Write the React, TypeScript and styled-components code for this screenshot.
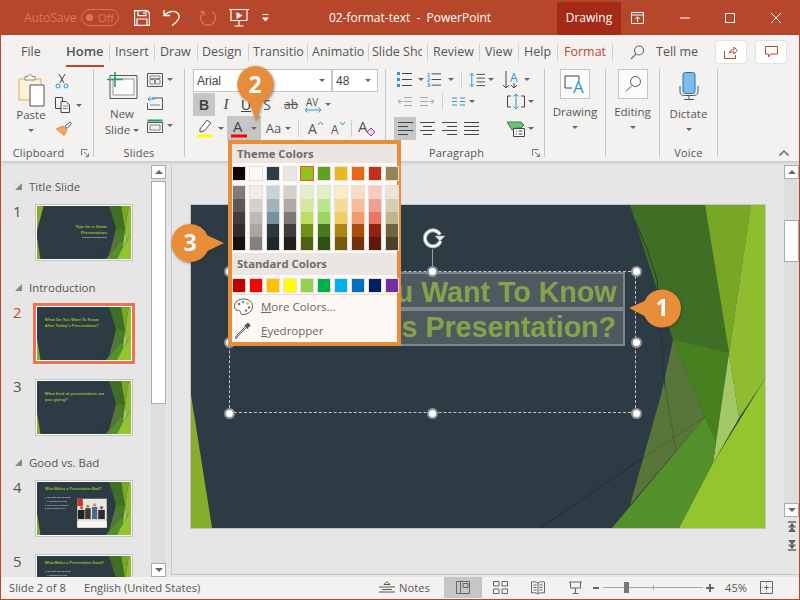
import React from "react";
import styled, { createGlobalStyle } from "styled-components";

const Global = createGlobalStyle`
  html, body { margin: 0; padding: 0; background: #fff; }
  * { box-sizing: border-box; }
`;

const RED = "#b7472a";
const INK = "#444444";
const BLUE = "#2b95d6";

const Window = styled.div`
  position: relative; width: 800px; height: 600px; overflow: hidden;
  display: flex; flex-direction: column;
  border-left: 1px solid ${RED}; border-right: 1px solid ${RED}; border-bottom: 1px solid ${RED};
  font-family: "Open Sans", "Noto Sans", sans-serif; color: #555; background: #e6e6e6;
`;
const TitleBar = styled.header`
  height: 35px; background: ${RED}; display: flex; align-items: center; flex: none; color: #fff;
`;
const Slot = styled.div<{ $l?: number; $w?: number }>`
  margin-left: ${(p) => p.$l ?? 0}px;
  ${(p) => (p.$w ? `width:${p.$w}px;` : "")}
  display: flex; align-items: center; justify-content: center; flex: none;
`;
const AutoSave = styled.span`
  margin-left: 23px; width: 57px; font-size: 12px; color: #d8775d; white-space: nowrap;
`;
const Toggle = styled.div`
  width: 38px; height: 17px; border: 1.5px solid #d8775d; border-radius: 9px; display: flex; align-items: center;
  padding-left: 4px; gap: 5px; font-size: 11px; color: #d8775d;
`;
const Dot = styled.i`
  width: 7px; height: 7px; border-radius: 50%; background: #d8775d; display: block;
`;
const DocTitle = styled.div`
  margin-left: 59px; width: 160px; font-size: 12px; white-space: pre;
`;
const DrawingTab = styled.div`
  margin-left: 68px; width: 64px; height: 33px; align-self: flex-end; background: #a52a17; display: flex;
  align-items: center; justify-content: center; font-size: 12px; padding-bottom: 2px;
`;
const TabBar = styled.nav`
  height: 34px; background: #f3f2f1; display: flex; align-items: center; flex: none;
`;
const Tab = styled.div<{ $l: number; $w: number; $accent?: boolean }>`
  margin-left: ${(p) => p.$l}px; width: ${(p) => p.$w}px; height: 20px; line-height: 19px; flex: none; overflow: hidden;
  font-size: 12.5px; white-space: nowrap; text-align: left;
  color: ${(p) => (p.$accent ? RED : "#555")};
`;
const TabUnderline = styled.div`
  position: absolute; left: 0; bottom: 0; width: 38px; height: 2px; background: ${RED};
`;
const TabSep = styled.i<{ $l?: number }>`
  width: 1px; height: 17px; background: #d2d0ce; flex: none; display: block; margin-left: ${(p) => p.$l ?? 0}px;
`;
const HomeBox = styled.div`
  margin-left: 25px; width: 43px; height: 26px; line-height: 21px; position: relative; font-size: 13px; font-weight: 600;
  color: #555; margin-top: 3px; flex: none;
`;
const AppButton = styled.div<{ $l: number }>`
  margin-left: ${(p) => p.$l}px; width: 32px; height: 24px; background: #fff; border: 1px solid #e4e2e0; border-radius: 3px;
  display: flex; align-items: center; justify-content: center; flex: none;
`;
const Ribbon = styled.section`
  height: 92px; flex: none; background: #f3f2f1; display: flex; position: relative; z-index: 2;
  box-shadow: 0 2px 3px rgba(0,0,0,0.12);
`;
const Group = styled.div<{ $w: number }>`
  width: ${(p) => p.$w}px; height: 88px; flex: none; display: flex; flex-direction: column;
  border-right: 1px solid #c6c6c6;
`;
const GroupBody = styled.div`
  height: 76px; flex: none; display: flex; min-height: 0;
`;
const GroupLabel = styled.div<{ $launch?: boolean }>`
  height: 12px; line-height: 16px; font-size: 11px; text-align: center; position: relative; color: #555; letter-spacing: 0.2px;
  padding-right: ${(p) => (p.$launch ? 17 : 0)}px;
`;
const Launcher = styled.svg`
  position: absolute; right: 4px; top: 4px;
`;
const Collapse = styled.svg`
  position: absolute; left: 778px; top: 81px;
`;
const Column = styled.div<{ $l?: number; $w?: number; $gap?: number; $t?: number }>`
  margin-left: ${(p) => p.$l ?? 0}px; margin-top: ${(p) => p.$t ?? 0}px;
  ${(p) => (p.$w ? `width:${p.$w}px;` : "")}
  display: flex; flex-direction: column; align-items: center; flex: none; gap: ${(p) => p.$gap ?? 0}px;
`;
const LeftColumn = styled(Column)`
  align-items: flex-start;
`;
const BigLabel = styled.div<{ $t?: number }>`
  font-size: 11.5px; line-height: 16px; margin-top: ${(p) => p.$t ?? 0}px; color: #555; display: flex; align-items: center; gap: 3px; white-space: nowrap;
`;
const Caret = styled.i<{ $l?: number; $t?: number }>`
  display: block; flex: none; width: 0; height: 0; border-left: 3.5px solid transparent; border-right: 3.5px solid transparent;
  border-top: 3.5px solid #666; margin-left: ${(p) => p.$l ?? 0}px; margin-top: ${(p) => p.$t ?? 0}px;
`;
const Row = styled.div<{ $h: number; $t?: number }>`
  height: ${(p) => p.$h}px; margin-top: ${(p) => p.$t ?? 0}px; display: flex; align-items: center; flex: none;
`;
const Combo = styled.div<{ $w: number }>`
  width: ${(p) => p.$w}px; height: 23px; background: #fff; border: 1px solid #c6c6c6; display: flex; align-items: center;
  padding: 0 6px 0 3px; justify-content: space-between; font-family: "Liberation Sans", sans-serif; font-size: 12px; color: #444; flex: none;
`;
const Tool = styled.div<{ $w: number; $l?: number; $on?: boolean; $h?: number }>`
  width: ${(p) => p.$w}px; height: ${(p) => p.$h ?? 23}px; margin-left: ${(p) => p.$l ?? 0}px; flex: none;
  background: ${(p) => (p.$on ? "#c6c6c6" : "transparent")}; display: flex; align-items: center; justify-content: center;
  color: #555; font-size: 14px;
`;
const BoldGlyph = styled.b`
  font-family: "Liberation Sans", sans-serif; font-size: 14px; color: #444;
`;
const SerifGlyph = styled.i`
  font-family: "Liberation Serif", serif; font-size: 15px; color: #444;
`;
const UnderGlyph = styled.u`
  font-family: "Liberation Sans", sans-serif; font-size: 14px; color: #444;
`;
const SansGlyph = styled.span<{ $size?: number; $strike?: boolean }>`
  font-size: ${(p) => p.$size ?? 14}px; color: #555; white-space: nowrap;
  ${(p) => (p.$strike ? "text-decoration: line-through;" : "")}
`;
const VSep = styled.i<{ $l: number }>`
  display: block; width: 1px; height: 17px; background: #d2d0ce; margin-left: ${(p) => p.$l}px; flex: none;
`;
const IconTile = styled.div`
  width: 30px; height: 30px; background: #fbfbfb; border: 1px solid #c6c6c6; display: flex; align-items: center; justify-content: center;
`;
const Body = styled.div`
  flex: 1; min-height: 0; display: flex; padding-top: 4px;
`;
const LeftPane = styled.aside`
  width: 150px; flex: none; overflow: hidden; padding-top: 10px; background: #e6e6e6;
`;
const Section = styled.div`
  margin-bottom: 16px;
`;
const SectionHead = styled.div`
  height: 24px; margin-bottom: 6px; display: flex; align-items: center; gap: 7px; padding: 0 0 2px 14px; font-size: 11.5px; color: #555;
`;
const SlideList = styled.div`
  display: flex; flex-direction: column; gap: 19px;
`;
const ThumbRow = styled.div`
  display: flex; height: 55px; position: relative;
`;
const ThumbNum = styled.div<{ $on?: boolean }>`
  width: 35px; padding-left: 12px; font-size: 15px; line-height: 12px; color: ${(p) => (p.$on ? "#d9432a" : "#555")};
`;
const Thumb = styled.div<{ $on?: boolean }>`
  width: 96px; height: 55px; background: #2d3b44; flex: none; line-height: 0;
  ${(p) => (p.$on
    ? "border: 1px solid #fff; box-shadow: 0 0 0 3px #ef7150;"
    : "border: 1px solid #fff; box-shadow: 0 0 0 1px #c4c4c4;")}
`;
const Scroll = styled.div`
  width: 15px; flex: none; background: #dedede; display: flex; flex-direction: column; align-items: center;
`;
const ScrollBtn = styled.div`
  width: 15px; height: 14px; flex: none; background: #fff; border: 1px solid #ababab; display: flex; align-items: center; justify-content: center;
`;
const ScrollThumb = styled.div<{ $t: number; $h: number }>`
  width: 15px; height: ${(p) => p.$h}px; margin-top: ${(p) => p.$t}px; background: #fff; border: 1px solid #ababab; flex: none;
`;
const ScrollFill = styled.div`
  flex: 1;
`;
const ScrollTail = styled.div`
  height: 57px; flex: none; display: flex; flex-direction: column; align-items: center; gap: 6px; padding-top: 4px; background: #e6e6e6; width: 15px;
`;
const UpTri = styled.i`
  display: block; width: 0; height: 0; border-left: 4px solid transparent; border-right: 4px solid transparent; border-bottom: 4px solid #666;
`;
const DownTri = styled.i`
  display: block; width: 0; height: 0; border-left: 4px solid transparent; border-right: 4px solid transparent; border-top: 4px solid #666;
`;
const Main = styled.main`
  flex: 1; margin-left: 5px; margin-bottom: 2px; min-width: 0; display: flex; border-left: 1px solid #c6c6c6; border-bottom: 1px solid #c6c6c6;
`;
const Stage = styled.div`
  flex: 1; padding: 40px 0 0 19px; min-width: 0;
`;
const Slide = styled.div`
  width: 574px; height: 323px; position: relative; background: #2d3b44; box-shadow: 0 0 0 1px #c4c4c4;
`;
const SlideSvg = styled.svg`
  display: block; width: 100%; height: 100%;
`;
const SelBox = styled.div`
  position: absolute; left: 38px; top: 66px; width: 407px; height: 142px; border: 1px dashed #bfc5c8;
  display: flex; flex-direction: column; align-items: flex-end; padding: 2px 12px 0 0; gap: 4px;
`;
const TitleLine = styled.div<{ $pr: number; $pt: number }>`
  width: 385px; height: 33px; line-height: 32px; padding: ${(p) => p.$pt}px ${(p) => p.$pr}px 0 0; white-space: nowrap; background: #4e5a60;
  box-shadow: 0 0 0 2px #7e8689; text-align: right;
  font-family: "Liberation Sans", Arial, sans-serif; font-weight: 700; font-size: 28.6px; color: #86a24a;
`;
const Handle = styled.i<{ $x: number; $y: number }>`
  position: absolute; left: ${(p) => p.$x - 5.5}px; top: ${(p) => p.$y - 5.5}px; width: 11px; height: 11px; border-radius: 50%;
  background: #fff; border: 2px solid #8d9498; display: block;
`;
const RotateStem = styled.i`
  position: absolute; left: 241px; top: 44px; width: 1px; height: 18px; background: #9aa0a3; display: block;
`;
const RotateIcon = styled.svg`
  position: absolute; left: 230px; top: 22px;
`;
const StatusBar = styled.footer`
  height: 22px; flex: none; background: #f3f2f1; display: flex; align-items: center; font-size: 11.2px; color: #555; padding-bottom: 1px;
`;
const StatusText = styled.span<{ $l: number; $w?: number }>`
  margin-left: ${(p) => p.$l}px; ${(p) => (p.$w ? `width:${p.$w}px;` : "")} white-space: nowrap; flex: none;
`;
const ViewBtn = styled.div<{ $l?: number; $w: number; $on?: boolean }>`
  margin-left: ${(p) => p.$l ?? 0}px; width: ${(p) => p.$w}px; height: 21px; flex: none; background: ${(p) => (p.$on ? "#c6c6c6" : "transparent")};
  display: flex; align-items: center; justify-content: center;
`;
const Slider = styled.div`
  margin-left: 4px; width: 100px; height: 1px; background: #a6a6a6; position: relative; flex: none;
`;
const SliderKnob = styled.i`
  position: absolute; left: 21px; top: -5px; width: 5px; height: 11px; background: #777; display: block;
`;
const SliderTick = styled.i`
  position: absolute; left: 50px; top: -2px; width: 1px; height: 5px; background: #a6a6a6; display: block;
`;
const Menu = styled.div`
  position: absolute; left: 227px; top: 140px; width: 173px; height: 206px; border: 4px solid #e88e3a; background: #fdf8f4; z-index: 5;
  display: flex; flex-direction: column;
`;
const MenuHead = styled.div<{ $h: number; $t?: number }>`
  height: ${(p) => p.$h}px; margin-top: ${(p) => p.$t ?? 0}px; background: #ebe6e1; padding-left: 5px; font-size: 11.3px; font-weight: 700; color: #6c6c6c;
  display: flex; align-items: center; flex: none;
`;
const SwatchRow = styled.div<{ $t: number }>`
  display: flex; gap: 5px; margin: ${(p) => p.$t}px 0 0 0; padding-left: 1px; flex: none;
`;
const Swatch = styled.i<{ $c: string; $sel?: boolean }>`
  display: block; width: 12px; height: 13px; flex: none; background: ${(p) => p.$c};
  box-shadow: 0 0 0 1px ${(p) => (p.$sel ? "#e85a1a" : "#e4e0dc")};
`;
const ShadeGrid = styled.div`
  display: flex; gap: 5px; margin-top: 6px; padding-left: 1px; flex: none;
`;
const ShadeCol = styled.div`
  width: 12px; display: flex; flex-direction: column; box-shadow: 0 0 0 1px #e4e0dc; flex: none;
`;
const Shade = styled.i<{ $c: string }>`
  display: block; height: 12.8px; background: ${(p) => p.$c};
`;
const Divider = styled.div`
  height: 1px; background: #e0dcd8; margin-top: 2px; flex: none;
`;
const MenuItem = styled.div`
  height: 24px; display: flex; align-items: center; flex: none; font-size: 11.5px; color: #666; padding-left: 1px; gap: 8px;
`;
const MenuIcon = styled.div`
  width: 20px; display: flex; justify-content: center; flex: none;
`;
const CalloutBox = styled.svg<{ $x: number; $y: number }>`
  position: absolute; left: ${(p) => p.$x}px; top: ${(p) => p.$y}px; z-index: 6; overflow: visible;
  filter: drop-shadow(1px 1.5px 1.5px rgba(60, 40, 20, 0.55));
`;

const Svg: React.FC<{ w: number; h: number; vb?: string; children: React.ReactNode; stroke?: string; sw?: number }> = ({ w, h, vb, children, stroke = INK, sw = 1 }) => (
  <svg width={w} height={h} viewBox={vb ?? `0 0 ${w} ${h}`} fill="none" stroke={stroke} strokeWidth={sw}>{children}</svg>
);

const Art: React.FC<{ flip?: boolean; children?: React.ReactNode }> = ({ flip, children }) => (
  <SlideSvg viewBox="0 0 574 323" preserveAspectRatio="none">
    <rect width="574" height="323" fill="#2d3b44" />
    <polygon points="0,190 0,323 21,323" fill="#87ae2b" />
    {flip && <polygon points="0,0 40,0 0,150" fill="#87ae2b" />}
    <polygon points="439,0 514,0 538,148 525,238 482,135" fill="#3f6f24" />
    <polygon points="482,135 538,148 525,238" fill="#47801e" />
    <polygon points="514,0 560,0 538,148" fill="#78a823" />
    <polygon points="560,0 574,0 574,174 548,213 538,148" fill="#90bd30" />
    <polygon points="538,148 548,213 522,258 525,238" fill="#a3c965" />
    <polygon points="482,135 514,212 439,300 470,190" fill="#59763a" />
    <polygon points="514,212 525,238 522,258 488,323 421,323" fill="#539029" />
    <polygon points="574,174 574,323 488,323 522,258" fill="#93c52e" />
    <path d="M444 15 Q458 45 466 75 L474 182" stroke="#22303a" strokeWidth="1" fill="none" opacity="0.8" />
    <path d="M474 182 L485 245" stroke="#2a3a1f" strokeWidth="1" fill="none" opacity="0.4" />
    <path d="M349 323 L452 253" stroke="#1f2a30" strokeWidth="1" fill="none" opacity="0.85" />
    <path d="M452 253 L514 212" stroke="#2a3a1f" strokeWidth="1" fill="none" opacity="0.3" />
    {children}
  </SlideSvg>
);

const thumbTitle = { fontFamily: "Liberation Sans, sans-serif", fontWeight: 700, fill: "#90c226" } as const;

const bulletLines = ["The slide has too much", "Reading the slide", "There are no pictures", "Text is hard to see"];

const Bullets: React.FC<{ count: number }> = ({ count }) => (
  <>
    {bulletLines.slice(0, count).map((t, i) => {
      const y = 100 + i * 22;
      return (
        <React.Fragment key={t}>
          <rect x={i === 1 ? 64 : 48} y={y - 6} width="6" height="6" fill="#90c226" />
          <text x={i === 1 ? 76 : 60} y={y} fontSize="14" fill="#e8e8e8" fontFamily="Liberation Sans, sans-serif">{t}</text>
        </React.Fragment>
      );
    })}
  </>
);

const Photo = () => (
  <g>
    <rect x="246" y="102" width="180" height="176" fill="#e9e5df" />
    <rect x="246" y="102" width="34" height="44" fill="#c8381c" />
    <rect x="246" y="240" width="180" height="38" fill="#f7f7f5" />
    <rect x="250" y="170" width="40" height="56" fill="#252220" />
    <rect x="294" y="160" width="34" height="66" fill="#3d3834" />
    <rect x="336" y="152" width="32" height="74" fill="#486a8a" />
    <rect x="374" y="170" width="40" height="56" fill="#2e2b29" />
    <circle cx="272" cy="156" r="10" fill="#a8604c" />
    <circle cx="310" cy="148" r="10" fill="#bb8068" />
    <circle cx="352" cy="140" r="10" fill="#c99078" />
    <circle cx="394" cy="156" r="10" fill="#8a5a48" />
  </g>
);

const Up = () => <ScrollBtn><UpTri /></ScrollBtn>;
const Down = () => <ScrollBtn><DownTri /></ScrollBtn>;

const Collapser = () => (
  <svg width="7" height="7" viewBox="0 0 7 7"><polygon points="7,0 7,7 0,7" fill="#888" /></svg>
);

const Lines: React.FC<{ w?: number; rows: [number, number][]; gap?: number; c?: string }> = ({ w = 15, rows, gap = 5, c = "#444" }) => (
  <Svg w={w} h={rows.length * gap} stroke={c}>
    {rows.map(([a, b], i) => <line key={i} x1={a} x2={b} y1={i * gap + 1.5} y2={i * gap + 1.5} />)}
  </Svg>
);

const Launch = () => (
  <Launcher width="8" height="8" viewBox="0 0 8 8" fill="none" stroke="#777">
    <path d="M.5 6.5V.5h6M3 3l4.5 4.5M7.5 4.5v3h-3" />
  </Launcher>
);

const themeRow = ["#0a0806", "#fdf9f6", "#2f3d44", "#e8e5e2", "#90c226", "#5da022", "#e6b91e", "#e76618", "#c42f1a", "#918655"];
const shades = [
  ["#7f7c7b", "#5a5958", "#3f3e3c", "#302e2c", "#14120f"],
  ["#f0ece9", "#d5d1ce", "#bcb9b6", "#a8a5a2", "#858381"],
  ["#c8d3d7", "#a2b3b9", "#75929e", "#2b383e", "#1e282c"],
  ["#d4d0cd", "#aeaaa7", "#7b7875", "#3f3d3b", "#1f1e1c"],
  ["#e4efc5", "#d5e69d", "#bfdd63", "#6e9019", "#4f6012"],
  ["#e0efc4", "#bde58f", "#9bd75e", "#467b1c", "#2f5213"],
  ["#faedc8", "#f4dc96", "#f0cd66", "#ad8510", "#745a0c"],
  ["#f9dcc5", "#f4bc97", "#f09b6a", "#ab4c0e", "#73330a"],
  ["#f6cbc2", "#f2a093", "#eb7565", "#912312", "#60170c"],
  ["#eae5d7", "#d4cdb2", "#bfb48e", "#6e653f", "#4a432a"],
];
const standard = ["#c00000", "#ff0000", "#ffc000", "#ffff00", "#92d050", "#00b050", "#00b0f0", "#0070c0", "#002060", "#7030a0"];

const handles: [number, number][] = [[38, 66], [241, 66], [445, 66], [38, 137], [445, 137], [38, 208], [241, 208], [445, 208]];

const ThumbItem: React.FC<{ n: number; on?: boolean; flip?: boolean; children?: React.ReactNode }> = ({ n, on, flip, children }) => (
  <ThumbRow>
    <ThumbNum $on={on}>{n}</ThumbNum>
    <Thumb $on={on}><Art flip={flip}>{children}</Art></Thumb>
  </ThumbRow>
);

const Head: React.FC<{ t: string }> = ({ t }) => (
  <SectionHead><Collapser />{t}</SectionHead>
);

export default function App() {
  return (
    <Window>
      <Global />
      <TitleBar>
        <AutoSave>AutoSave</AutoSave>
        <Toggle><Dot />Off</Toggle>
        <Slot $l={15}>
          <Svg w={16} h={16} stroke="#fff" sw={1.2}><path d="M.6.6h12.5l2.3 2.3v12.5H.6zM4 .6v5h8v-5M3 15.4V9h10v6.4M10 2v2" /></Svg>
        </Slot>
        <Slot $l={13}>
          <Svg w={18} h={17} stroke="#fff" sw={1.3}><path d="M1 6.5C5 2 12 1 15 4.5c2.5 3.5.5 8-6 12M1 1v5.5h6" /></Svg>
        </Slot>
        <Slot $l={4}><Caret /></Slot>
        <Slot $l={8}>
          <Svg w={18} h={17} stroke="#d8775d" sw={1.3}><path d="M13 2.500a7.500 7.500 0 1 1-8 0M5 2.500V7M5 2.500H1.500" /></Svg>
        </Slot>
        <Slot $l={12}>
          <Svg w={20} h={19} stroke="#fff" sw={1.2}><path d="M0 1.5h20M2 1.5v11h16v-11M10 12.5v5M5.5 18h9" /><path d="M7.5 4l6 3.5-6 3.5z" fill="#fff" stroke="none" /></Svg>
        </Slot>
        <Slot $l={12}>
          <Svg w={9} h={8}><path d="M1.5.5h6" stroke="#fff" /><path d="M1 3.5h7L4.5 7.5z" fill="#fff" stroke="none" /></Svg>
        </Slot>
        <DocTitle>02-format-text  -  PowerPoint</DocTitle>
        <DrawingTab>Drawing</DrawingTab>
        <Slot $l={10}>
          <Svg w={13} h={12} stroke="#fff"><path d="M.5.5h12v11H.5zM.5 3h12M6.5 10V5M4.3 7l2.2-2.2L8.7 7" /></Svg>
        </Slot>
        <Slot $l={36}><Svg w={10} h={2} stroke="#fff"><path d="M0 1h10" /></Svg></Slot>
        <Slot $l={35}><Svg w={10} h={10} stroke="#fff"><rect x=".5" y=".5" width="9" height="9" /></Svg></Slot>
        <Slot $l={36}><Svg w={10} h={10} stroke="#fff"><path d="M0 0l10 10M10 0L0 10" /></Svg></Slot>
      </TitleBar>
      <TabBar>
        <Tab $l={20} $w={20}>File</Tab>
        <HomeBox>Home<TabUnderline /></HomeBox>
        <TabSep />
        <Tab $l={5} $w={39}>Insert</Tab>
        <TabSep />
        <Tab $l={5} $w={37}>Draw</Tab>
        <TabSep />
        <Tab $l={4} $w={46}>Design</Tab>
        <TabSep />
        <Tab $l={4} $w={54}>Transitio</Tab>
        <TabSep />
        <Tab $l={4} $w={56}>Animatio</Tab>
        <TabSep />
        <Tab $l={3} $w={50}>Slide Sho</Tab>
        <TabSep $l={5} />
        <Tab $l={5} $w={46}>Review</Tab>
        <TabSep />
        <Tab $l={5} $w={33}>View</Tab>
        <TabSep />
        <Tab $l={5} $w={33}>Help</Tab>
        <TabSep />
        <Tab $l={6} $w={48} $accent>Format</Tab>
        <TabSep />
        <Slot $l={17}>
          <Svg w={14} h={15} stroke="#666" sw={1.1}><circle cx="9" cy="5.5" r="4.5" /><path d="M6 9L1 14" /></Svg>
        </Slot>
        <Tab $l={12} $w={42}>Tell me</Tab>
        <AppButton $l={17}>
          <Svg w={14} h={13} stroke={RED}><path d="M.5 5v7.5h11V9M5 7c1-2 3-3.500 5-3.500V1l3.500 3.500L10 8V5.800C8 5.800 6 6.300 5 7z" /></Svg>
        </AppButton>
        <AppButton $l={8}>
          <Svg w={13} h={12} stroke={RED}><path d="M.5.5h12v7.500H6L3.500 11V8H.5z" /></Svg>
        </AppButton>
      </TabBar>
      <Ribbon>
        <Group $w={93}>
          <GroupBody>
            <Column $l={7} $w={46} $t={4}>
              <Svg w={28} h={34}>
                <path d="M2 6h22v21H2z" fill="#fdf1d9" stroke="#e9a94e" />
                <path d="M8 7V3.500h3C11 1 15 1 15 3.500h3V7z" fill="#fff" stroke="#888" />
                <path d="M13 12h14v21H13z" fill="#fff" stroke="#555" />
              </Svg>
              <BigLabel>Paste</BigLabel>
              <Caret $t={6} />
            </Column>
            <LeftColumn $l={1} $t={4} $gap={8}>
              <Svg w={14} h={16} stroke="#444"><path d="M4 1l5 9M10 1L5 10" /><circle cx="3" cy="13" r="2" stroke={BLUE} /><circle cx="11" cy="13" r="2" stroke={BLUE} /></Svg>
              <Row $h={16}>
                <Svg w={16} h={16} stroke="#444"><path d="M.5.5h7v11H.5z" /><path d="M6 4.500h5l3.500 3.500v7.500H6z" fill="#f3f2f1" /><path d="M8 9h5M8 11.500h5" stroke="#888" /></Svg>
                <Caret $l={5} />
              </Row>
              <Svg w={17} h={16}>
                <path d="M10 5l5-4 1.500 1.500L12 7.500z" fill="#fff" stroke="#555" />
                <path d="M8 5l4 4-3 5.500L1.500 8z" fill="#f3a666" stroke="#e08a35" />
              </Svg>
            </LeftColumn>
          </GroupBody>
          <GroupLabel $launch>Clipboard<Launch /></GroupLabel>
        </Group>
        <Group $w={91}>
          <GroupBody>
            <Column $l={4} $w={48} $t={3}>
              <Svg w={31} h={28}>
                <path d="M3 3.500h27v23H3z" stroke="#555" />
                <path d="M6 7h21v16H6z" stroke="#999" fill="#fafafa" />
                <path d="M8 0v15M0 7.500h16" stroke="#1ea55d" strokeWidth="1.6" />
              </Svg>
              <BigLabel $t={6}>New</BigLabel>
              <BigLabel>Slide<Caret /></BigLabel>
            </Column>
            <LeftColumn $l={1} $t={3} $gap={8}>
              <Row $h={15}>
                <Svg w={16} h={14}><path d="M.5.5h15v13H.5z" stroke="#555" /><path d="M3 3h10v2.500H3zM3 6.500h4.500V11H3zM8.500 6.500H13V11H8.500z" stroke="#888" /></Svg>
                <Caret $l={4} />
              </Row>
              <Row $h={15}>
                <Svg w={16} h={14}><path d="M5 2h10.500v11.500H.5V7" stroke="#555" /><path d="M3 9h10" stroke="#888" /><path d="M1 3h7M3.500.5L1 3l2.500 2.500" stroke={BLUE} /></Svg>
              </Row>
              <Row $h={15}>
                <Svg w={16} h={15}><path d="M.5 2.500h15" stroke="#1ea55d" strokeWidth="2" /><path d="M.5 4.500h15v10H.5z" stroke="#555" /><path d="M3 7h10v5H3z" stroke="#888" /></Svg>
                <Caret $l={4} />
              </Row>
            </LeftColumn>
          </GroupBody>
          <GroupLabel>Slides</GroupLabel>
        </Group>
        <Group $w={201}>
          <GroupBody>
            <LeftColumn $l={8}>
              <Row $h={23}>
                <Combo $w={139}>Arial<Caret /></Combo>
                <Combo $w={46}>48<Caret /></Combo>
              </Row>
              <Row $h={23} $t={1}>
                <Tool $w={22} $on><BoldGlyph>B</BoldGlyph></Tool>
                <Tool $w={14} $l={4}><SerifGlyph>I</SerifGlyph></Tool>
                <Tool $w={14} $l={6}><UnderGlyph>U</UnderGlyph></Tool>
                <Tool $w={14} $l={7}><SansGlyph>S</SansGlyph></Tool>
                <Tool $w={18} $l={8}><SansGlyph $size={12} $strike>ab</SansGlyph></Tool>
                <Tool $w={18} $l={4}>
                  <Svg w={18} h={18} vb="0 0 18 18"><text x="2" y="10" fontFamily="Open Sans, sans-serif" fontSize="10" stroke="none" fill="#555">AV</text><path d="M1 14h16M3.500 11.500L1 14l2.500 2.500M14.500 11.500L17 14l-2.500 2.500" stroke={BLUE} /></Svg>
                </Tool>
                <Caret $l={3} />
              </Row>
              <Row $h={24}>
                <Tool $w={20} $l={1} $h={24}>
                  <Svg w={17} h={19}>
                    <path d="M11 1l4 3-7 8-4 1 0-3z" stroke="#555" fill="#fff" />
                    <path d="M1 15.500h15.500v3H1z" fill="#ffff00" stroke="none" />
                  </Svg>
                </Tool>
                <Caret $l={4} />
                <Tool $w={34} $l={3} $h={24} $on>
                  <Svg w={16} h={19}>
                    <text x="2" y="13" fontFamily="Open Sans, sans-serif" fontSize="15" stroke="none" fill="#444">A</text>
                    <path d="M0 15.500h16v3H0z" fill="#ff0000" stroke="none" />
                  </Svg>
                  <Caret $l={4} />
                </Tool>
                <Tool $w={21} $l={2} $h={24}><SansGlyph $size={13}>Aa</SansGlyph></Tool>
                <Caret $l={1} />
                <VSep $l={7} />
                <Tool $w={16} $l={9} $h={24}><Svg w={16} h={14}><text x="0" y="13" fontFamily="Open Sans, sans-serif" fontSize="14" stroke="none" fill="#555">A</text><path d="M10 4l2.500-3L15 4" stroke={BLUE} /></Svg></Tool>
                <Tool $w={14} $l={7} $h={24}><Svg w={14} h={14}><text x="0" y="13" fontFamily="Open Sans, sans-serif" fontSize="12" stroke="none" fill="#555">A</text><path d="M9 1l2.500 3L14 1" stroke={BLUE} /></Svg></Tool>
                <VSep $l={6} />
                <Tool $w={18} $l={6} $h={24}><Svg w={18} h={18}><text x="0" y="13" fontFamily="Open Sans, sans-serif" fontSize="15" stroke="none" fill="#555">A</text><path d="M9 13l4-4 4 4-4 4z" fill="#e9d3f3" stroke="#8e3cb0" /></Svg></Tool>
              </Row>
            </LeftColumn>
          </GroupBody>
          <GroupLabel>&nbsp;</GroupLabel>
        </Group>
        <Group $w={159}>
          <GroupBody>
            <LeftColumn $l={8}>
              <Row $h={21}>
                <Tool $w={15} $l={3} $h={21}>
                  <Svg w={15} h={15}><path d="M0 0h3v3H0zM0 6h3v3H0zM0 12h3v3H0z" fill={BLUE} stroke="none" /><path d="M5 1.500h10M5 7.500h10M5 13.500h10" /></Svg>
                </Tool>
                <Caret $l={6} />
                <Tool $w={15} $l={3} $h={21}>
                  <Svg w={16} h={15}><text x="0" y="5" fontSize="6" fontWeight="700" fontFamily="Liberation Sans, sans-serif" fill={BLUE} stroke="none">1</text><text x="0" y="10" fontSize="6" fontWeight="700" fontFamily="Liberation Sans, sans-serif" fill={BLUE} stroke="none">2</text><text x="0" y="15" fontSize="6" fontWeight="700" fontFamily="Liberation Sans, sans-serif" fill={BLUE} stroke="none">3</text><path d="M5 1.500h10M5 7.500h10M5 13.500h10" /></Svg>
                </Tool>
                <Caret $l={6} />
                <VSep $l={7} />
                <Tool $w={16} $l={7} $h={21}>
                  <Svg w={17} h={16}><path d="M3 1v14M.5 3.500L3 1l2.500 2.500M.5 12.500L3 15l2.500-2.500" stroke={BLUE} /><path d="M8 2h9M8 6h9M8 10h9M8 14h9" /></Svg>
                </Tool>
                <Caret $l={3} />
                <Tool $w={18} $l={9} $h={21}>
                  <Svg w={18} h={18}><text x="7" y="11" fontFamily="Open Sans, sans-serif" fontSize="12" stroke="none" fill={BLUE}>A</text><path d="M3 0v17M0 14l3 3 3-3M11 12v5M8 14l3 3 3-3" /></Svg>
                </Tool>
                <Caret $l={3} />
              </Row>
              <Row $h={23}>
                <Tool $w={14} $l={4}><Svg w={14} h={11} stroke="#aaa"><path d="M6 1.500h8M6 5.500h8M6 9.500h8M0 5.500h5M2.500 3L0 5.500 2.500 8" /></Svg></Tool>
                <Tool $w={14} $l={8}><Svg w={14} h={11} stroke="#aaa"><path d="M0 1.500h8M0 5.500h8M0 9.500h8M9 5.500h5M11.500 3L14 5.500 11.500 8" /></Svg></Tool>
                <VSep $l={8} />
                <Tool $w={13} $l={9}><Svg w={13} h={9} stroke={BLUE}><path d="M0 1h5M0 4.500h5M0 8h5M8 1h5M8 4.500h5M8 8h5" /></Svg></Tool>
                <Caret $l={4} />
                <Tool $w={18} $l={32}>
                  <Svg w={18} h={16}><path d="M4 2H.5v11H4M14 2h3.500v11H14" /><path d="M9 0v15M6.500 2.500L9 0l2.500 2.500M6.500 12.500L9 15l2.500-2.500" stroke={BLUE} /></Svg>
                </Tool>
                <Caret $l={3} />
              </Row>
              <Row $h={23} $t={4}>
                <Tool $w={22} $on><Lines rows={[[0,15],[0,10],[0,15],[0,10]]} gap={4} /></Tool>
                <Tool $w={15} $l={4}><Lines rows={[[0,15],[3,12],[0,15],[3,12]]} gap={4} /></Tool>
                <Tool $w={15} $l={7}><Lines rows={[[0,15],[5,15],[0,15],[5,15]]} gap={4} /></Tool>
                <Tool $w={15} $l={7}><Lines rows={[[0,15],[0,15],[0,15],[0,15]]} gap={4} /></Tool>
                <Tool $w={18} $l={28}>
                  <Svg w={18} h={16}><path d="M0 1h14l3 3-3 3H8L5 9 3 6z" fill="#6fbf73" stroke="#2e8b57" /><path d="M6.500 7.500h11v8h-11z" fill="#fff" stroke="#444" /><path d="M9 10h1M11.500 10h4M9 13h1M11.500 13h4" /></Svg>
                </Tool>
                <Caret $l={3} />
              </Row>
            </LeftColumn>
          </GroupBody>
          <GroupLabel $launch>Paragraph<Launch /></GroupLabel>
        </Group>
        <Group $w={61}>
          <GroupBody>
            <Column $w={60}>
              <IconTile>
                <Svg w={22} h={20}><path d="M8 14H1V2h14v5" /><text x="9" y="19" fontSize="17" fontFamily="Open Sans, sans-serif" fill={BLUE} stroke="none">A</text></Svg>
              </IconTile>
              <BigLabel $t={5}>Drawing</BigLabel>
              <Caret $t={6} />
            </Column>
          </GroupBody>
          <GroupLabel>&nbsp;</GroupLabel>
        </Group>
        <Group $w={54}>
          <GroupBody>
            <Column $w={53}>
              <IconTile>
                <Svg w={16} h={16} stroke="#555"><circle cx="10.500" cy="5.500" r="5" /><path d="M7 9.500L1 15.500" /></Svg>
              </IconTile>
              <BigLabel $t={5}>Editing</BigLabel>
              <Caret $t={6} />
            </Column>
          </GroupBody>
          <GroupLabel>&nbsp;</GroupLabel>
        </Group>
        <Group $w={58}>
          <GroupBody>
            <Column $w={57} $t={3}>
              <Svg w={20} h={29}>
                <rect x="4" y=".5" width="12" height="21" rx="2.500" fill="#7fbcec" stroke="#1e73b8" />
                <path d="M1 14v6c0 3 3 3.500 5 3.500h8c2 0 5-.5 5-3.500v-6M10 23.500V27M5 27.500h10" stroke="#555" />
              </Svg>
              <BigLabel $t={5}>Dictate</BigLabel>
              <Caret $t={6} />
            </Column>
          </GroupBody>
          <GroupLabel>Voice</GroupLabel>
        </Group>
        <Collapse width="10" height="6" viewBox="0 0 10 6" fill="none" stroke="#777" strokeWidth="1.6">
          <path d="M.5 5.500L5 1l4.500 4.500" />
        </Collapse>
      </Ribbon>
      <Body>
        <LeftPane>
          <Section>
            <Head t="Title Slide" />
            <SlideList>
              <ThumbItem n={1} flip>
                <text x="426" y="132" textAnchor="end" fontSize="26" {...thumbTitle}>Tips for a Great</text>
                <text x="426" y="168" textAnchor="end" fontSize="26" {...thumbTitle}>Presentation</text>
                <text x="426" y="195" textAnchor="end" fontSize="12" fill="#e8e8e8" fontFamily="Liberation Sans, sans-serif">Professional Speaking Skills</text>
              </ThumbItem>
            </SlideList>
          </Section>
          <Section>
            <Head t="Introduction" />
            <SlideList>
              <ThumbItem n={2} on>
                <text x="48" y="84" fontSize="25" {...thumbTitle}>What Do You Want To Know</text>
                <text x="48" y="122" fontSize="25" {...thumbTitle}>After Today's Presentation?</text>
              </ThumbItem>
              <ThumbItem n={3}>
                <text x="48" y="84" fontSize="25" {...thumbTitle}>What kind of presentations are</text>
                <text x="48" y="122" fontSize="25" {...thumbTitle}>you giving?</text>
              </ThumbItem>
            </SlideList>
          </Section>
          <Section>
            <Head t="Good vs. Bad" />
            <SlideList>
              <ThumbItem n={4}>
                <text x="48" y="48" fontSize="22" {...thumbTitle}>What Makes a Presentation Bad?</text>
                <Bullets count={4} />
                <Photo />
              </ThumbItem>
              <ThumbItem n={5}>
                <text x="48" y="48" fontSize="22" {...thumbTitle}>What Makes a Presentation Good?</text>
                <Bullets count={2} />
              </ThumbItem>
            </SlideList>
          </Section>
        </LeftPane>
        <Scroll>
          <Up />
          <ScrollThumb $t={2} $h={223} />
          <ScrollFill />
          <Down />
        </Scroll>
        <Main>
          <Stage>
            <Slide>
              <Art />
              <SelBox>
                <TitleLine $pr={8} $pt={2}>What Do You Want To Know</TitleLine>
                <TitleLine $pr={10} $pt={0}>After Today's Presentation?</TitleLine>
              </SelBox>
              {handles.map(([x, y]) => <Handle key={`${x}-${y}`} $x={x} $y={y} />)}
              <RotateStem />
              <RotateIcon width="26" height="22" viewBox="0 0 26 22" fill="none">
                <path d="M19 7.500A8 8 0 1 0 19.500 14" stroke="#a9aeb0" strokeWidth="4" />
                <path d="M19 7.500A8 8 0 1 0 19.500 14" stroke="#fff" strokeWidth="2" />
                <path d="M14 9h10l-5 5z" fill="#e8e8e8" stroke="#a9aeb0" strokeWidth=".6" />
              </RotateIcon>
            </Slide>
          </Stage>
          <Scroll>
            <Up />
            <ScrollThumb $t={41} $h={42} />
            <ScrollFill />
            <Down />
            <ScrollTail>
              <Svg w={10} h={12} stroke="#666"><path d="M1 1h8" strokeWidth="1.500" /><path d="M5 2L9 6.500H1zM5 6L9 11H1z" fill="#666" stroke="none" /></Svg>
              <Svg w={10} h={12} stroke="#666"><path d="M1 11h8" strokeWidth="1.500" /><path d="M5 10L9 5.500H1zM5 6L9 1H1z" fill="#666" stroke="none" /></Svg>
            </ScrollTail>
          </Scroll>
        </Main>
      </Body>
      <StatusBar>
        <StatusText $l={8} $w={75}>Slide 2 of 8</StatusText>
        <StatusText $w={295} $l={0}>English (United States)</StatusText>
        <Slot $w={16}>
          <Svg w={16} h={13} stroke="#555"><path d="M5 3.500L8 .5l3 3zM0 6h16M3 8.500h10M0 11h16" /></Svg>
        </Slot>
        <StatusText $l={4} $w={45}>Notes</StatusText>
        <ViewBtn $w={38} $on>
          <Svg w={14} h={13} stroke="#666"><path d="M.5.5h13v12H.5zM4.500.5v12M7 2.500h5v4H7z" /></Svg>
        </ViewBtn>
        <ViewBtn $l={5} $w={27}>
          <Svg w={15} h={13} stroke="#666"><path d="M.5.5h5.500v4.500H.5zM9 .5h5.500v4.500H9zM.5 8h5.500v4.500H.5zM9 8h5.500v4.500H9z" /></Svg>
        </ViewBtn>
        <ViewBtn $l={10} $w={27}>
          <Svg w={14} h={14} stroke="#666"><path d="M7 2C5 .5 2.500.5.500 1v11c2-.5 4.500-.5 6.500 1 2-1.500 4.500-1.500 6.500-1V1c-2-.5-4.500-.5-6.500 1zM7 2v11M2.500 4h3M2.500 6.500h3M2.500 9h3M8.500 4h3M8.500 6.500h3M8.500 9h3" /></Svg>
        </ViewBtn>
        <ViewBtn $l={11} $w={27}>
          <Svg w={13} h={13} stroke="#666"><path d="M0 1h13M1.500 1v6h10V1M6.500 7v5M3.500 12.500h6" /></Svg>
        </ViewBtn>
        <Slot $l={4}><Svg w={6} h={2} stroke="#666" sw={2}><path d="M0 1h6" /></Svg></Slot>
        <Slider><SliderKnob /><SliderTick /></Slider>
        <Slot $l={3}><Svg w={8} h={8} stroke="#666" sw={2}><path d="M0 4h8M4 0v8" /></Svg></Slot>
        <StatusText $l={11} $w={30}>45%</StatusText>
        <Slot $l={5}>
          <Svg w={13} h={13} stroke="#666"><path d="M.5.5h12v12H.5zM4 6.500h5M6.500 4v5M6.500 1.500v1M6.500 10.500v1M1.500 6.500h1M10.500 6.500h1" /></Svg>
        </Slot>
      </StatusBar>

      <Menu>
        <MenuHead $h={19}>Theme Colors</MenuHead>
        <SwatchRow $t={4}>
          {themeRow.map((c, i) => <Swatch key={c} $c={c} $sel={i === 4} />)}
        </SwatchRow>
        <ShadeGrid>
          {shades.map((col, i) => (
            <ShadeCol key={i}>{col.map((c) => <Shade key={c} $c={c} />)}</ShadeCol>
          ))}
        </ShadeGrid>
        <MenuHead $h={22} $t={3}>Standard Colors</MenuHead>
        <SwatchRow $t={4}>
          {standard.map((c) => <Swatch key={c} $c={c} />)}
        </SwatchRow>
        <Divider />
        <MenuItem>
          <MenuIcon>
            <Svg w={19} h={17} stroke="#555"><path d="M9.500 1C4.500 1 .5 4 .5 8.500c0 3 2 4 4 4 1.500 0 2 .7 2 2 0 1.200 1 2 2.500 2 5 0 9.500-3.500 9.500-8C18.500 4 14.500 1 9.500 1z" fill="#fff" /><circle cx="5" cy="6" r="1.300" fill="#d2513a" stroke="none" /><circle cx="9" cy="4" r="1.300" fill="#4a9be0" stroke="none" /><circle cx="13.500" cy="5.500" r="1.300" fill="#e6b91e" stroke="none" /><circle cx="15" cy="9.500" r="1.300" fill="#8a53b5" stroke="none" /><circle cx="12" cy="12.500" r="1.300" fill="#5da022" stroke="none" /></Svg>
          </MenuIcon>
          <span><u>M</u>ore Colors...</span>
        </MenuItem>
        <MenuItem>
          <MenuIcon>
            <Svg w={17} h={17} stroke="#555"><path d="M12 2l3 3M9.500 3.500l4 4M11 6L3 14l-2 2.500L.5 15l2-2.500L10 5" fill="#eee" /><path d="M12 1.500c1-1 3.500 1.500 2.500 2.500L12 6 10 4z" fill="#555" /></Svg>
          </MenuIcon>
          <span><u>E</u>yedropper</span>
        </MenuItem>
      </Menu>

      <CalloutBox $x={235} $y={66} width="38" height="56" viewBox="0 0 38 56">
        <path d="M19 0a18.500 18.500 0 0 1 7 35.600L20 55l-7-19.300A18.500 18.500 0 0 1 19 0z" fill="#e88e3a" />
        <text x="19" y="27" textAnchor="middle" fontFamily="Open Sans, sans-serif" fontWeight="700" fontSize="23" fill="#fff">2</text>
      </CalloutBox>
      <CalloutBox $x={170} $y={224} width="54" height="38" viewBox="0 0 54 38">
        <path d="M19 0a19 19 0 0 1 17.500 11.500L53 19l-16.500 8A19 19 0 1 1 19 0z" fill="#e88e3a" />
        <text x="19" y="27" textAnchor="middle" fontFamily="Open Sans, sans-serif" fontWeight="700" fontSize="23" fill="#fff">3</text>
      </CalloutBox>
      <CalloutBox $x={627} $y={289} width="54" height="39" viewBox="0 0 54 39">
        <path d="M34 .5a19 19 0 1 1-17.500 26.500L1 19l15.500-7A19 19 0 0 1 34 .5z" fill="#e88e3a" />
        <text x="34" y="27" textAnchor="middle" fontFamily="Open Sans, sans-serif" fontWeight="700" fontSize="23" fill="#fff">1</text>
      </CalloutBox>
    </Window>
  );
}
